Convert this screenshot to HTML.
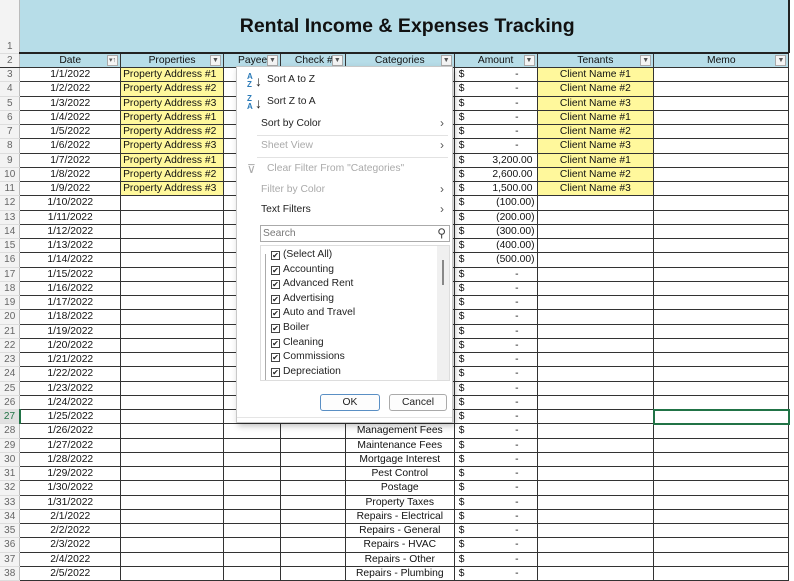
<!DOCTYPE html>
<html><head><meta charset="utf-8"><style>
*{box-sizing:border-box;margin:0;padding:0}
body{width:794px;height:579px;overflow:hidden;background:#fff;font-family:"Liberation Sans",sans-serif;font-size:10.3px;color:#111;position:relative}
table{position:absolute;left:0;top:0;border-collapse:collapse;table-layout:fixed}
td{height:14.26px;padding:0 2px;white-space:nowrap;overflow:hidden;border-bottom:1px solid #333;border-right:1px solid #333;line-height:13px}
td.rh{background:#f3f3f3;color:#666;text-align:center;border-right:1px solid #bbb;border-bottom:1px solid #ddd;font-size:10px;padding:0}
td.c{text-align:center}
td.y{background:#fff89c}
tr.h td{background:#b7dde8;text-align:center;position:relative;border-bottom:1px solid #333}
tr.h td.rh{background:#f3f3f3}
.fb{position:absolute;right:2px;top:1px;width:11px;height:11px;background:#f4f4f4;border:1px solid #aaa;font-size:7px;line-height:9px;color:#555;text-align:center}
.amt{display:flex;justify-content:space-between;padding:0 16px 0 2px}
.menu{position:absolute;left:236px;top:66px;width:217px;height:357px;background:#fff;border:1px solid #c8c8c8;box-shadow:2px 3px 6px rgba(0,0,0,.25);font-size:10.3px;color:#222}
.mi{position:absolute;left:24px}
.g{color:#aaa}
.arr{position:absolute;right:8px;font-size:12px;color:#555}
.sep{position:absolute;left:20px;right:4px;height:1px;background:#e2e2e2}
.ico{position:absolute;left:10px;font-size:8px;line-height:8px;color:#2a7ab8;font-weight:bold}
.list div{height:14.6px;line-height:14.6px;padding-left:22px;position:relative}
.cb{position:absolute;left:10px;top:3px;width:9px;height:9px;border:1px solid #444;font-size:8px;line-height:7px;text-align:center}
.btn{position:absolute;top:327px;height:17px;border:1px solid #aaa;border-radius:3px;text-align:center;line-height:15px;background:#fdfdfd}
</style></head><body>
<table>
<colgroup><col style="width:20px"><col style="width:101px"><col style="width:103px"><col style="width:57px"><col style="width:65px"><col style="width:109px"><col style="width:83px"><col style="width:117px"><col style="width:136px"><col style="width:3px"></colgroup>
<tr style="height:53px"><td class="rh" style="vertical-align:bottom;height:53px">1</td><td colspan="8" style="background:#b7dde8;border-bottom:2px solid #222;border-right:2px solid #222;text-align:center;font-size:19.5px;font-weight:bold;padding-left:8px">Rental Income &amp; Expenses Tracking</td><td style="border:none"></td></tr>
<tr class="h"><td class="rh">2</td><td>Date<span class="fb">▾↑</span></td><td>Properties<span class="fb">▼</span></td><td style="text-align:left;padding-left:14px">Payee<span class="fb">▼</span></td><td style="text-align:left;padding-left:14px">Check #<span class="fb">▼</span></td><td>Categories<span class="fb">▼</span></td><td>Amount<span class="fb">▼</span></td><td>Tenants<span class="fb">▼</span></td><td>Memo<span class="fb">▼</span></td><td style="border:none;background:#fff"></td></tr>
<tr><td class="rh">3</td><td class="c">1/1/2022</td><td class="y">Property Address #1</td><td></td><td></td><td></td><td><div class="amt"><span>$</span><span>-</span></div></td><td class="c y">Client Name #1</td><td></td><td style="border:none"></td></tr>
<tr><td class="rh">4</td><td class="c">1/2/2022</td><td class="y">Property Address #2</td><td></td><td></td><td></td><td><div class="amt"><span>$</span><span>-</span></div></td><td class="c y">Client Name #2</td><td></td><td style="border:none"></td></tr>
<tr><td class="rh">5</td><td class="c">1/3/2022</td><td class="y">Property Address #3</td><td></td><td></td><td></td><td><div class="amt"><span>$</span><span>-</span></div></td><td class="c y">Client Name #3</td><td></td><td style="border:none"></td></tr>
<tr><td class="rh">6</td><td class="c">1/4/2022</td><td class="y">Property Address #1</td><td></td><td></td><td></td><td><div class="amt"><span>$</span><span>-</span></div></td><td class="c y">Client Name #1</td><td></td><td style="border:none"></td></tr>
<tr><td class="rh">7</td><td class="c">1/5/2022</td><td class="y">Property Address #2</td><td></td><td></td><td></td><td><div class="amt"><span>$</span><span>-</span></div></td><td class="c y">Client Name #2</td><td></td><td style="border:none"></td></tr>
<tr><td class="rh">8</td><td class="c">1/6/2022</td><td class="y">Property Address #3</td><td></td><td></td><td></td><td><div class="amt"><span>$</span><span>-</span></div></td><td class="c y">Client Name #3</td><td></td><td style="border:none"></td></tr>
<tr><td class="rh">9</td><td class="c">1/7/2022</td><td class="y">Property Address #1</td><td></td><td></td><td></td><td><div class="amt" style="padding-right:2px"><span>$</span><span>3,200.00</span></div></td><td class="c y">Client Name #1</td><td></td><td style="border:none"></td></tr>
<tr><td class="rh">10</td><td class="c">1/8/2022</td><td class="y">Property Address #2</td><td></td><td></td><td></td><td><div class="amt" style="padding-right:2px"><span>$</span><span>2,600.00</span></div></td><td class="c y">Client Name #2</td><td></td><td style="border:none"></td></tr>
<tr><td class="rh">11</td><td class="c">1/9/2022</td><td class="y">Property Address #3</td><td></td><td></td><td></td><td><div class="amt" style="padding-right:2px"><span>$</span><span>1,500.00</span></div></td><td class="c y">Client Name #3</td><td></td><td style="border:none"></td></tr>
<tr><td class="rh">12</td><td class="c">1/10/2022</td><td></td><td></td><td></td><td></td><td><div class="amt" style="padding-right:0"><span>$</span><span>(100.00)</span></div></td><td></td><td></td><td style="border:none"></td></tr>
<tr><td class="rh">13</td><td class="c">1/11/2022</td><td></td><td></td><td></td><td></td><td><div class="amt" style="padding-right:0"><span>$</span><span>(200.00)</span></div></td><td></td><td></td><td style="border:none"></td></tr>
<tr><td class="rh">14</td><td class="c">1/12/2022</td><td></td><td></td><td></td><td></td><td><div class="amt" style="padding-right:0"><span>$</span><span>(300.00)</span></div></td><td></td><td></td><td style="border:none"></td></tr>
<tr><td class="rh">15</td><td class="c">1/13/2022</td><td></td><td></td><td></td><td></td><td><div class="amt" style="padding-right:0"><span>$</span><span>(400.00)</span></div></td><td></td><td></td><td style="border:none"></td></tr>
<tr><td class="rh">16</td><td class="c">1/14/2022</td><td></td><td></td><td></td><td></td><td><div class="amt" style="padding-right:0"><span>$</span><span>(500.00)</span></div></td><td></td><td></td><td style="border:none"></td></tr>
<tr><td class="rh">17</td><td class="c">1/15/2022</td><td></td><td></td><td></td><td></td><td><div class="amt"><span>$</span><span>-</span></div></td><td></td><td></td><td style="border:none"></td></tr>
<tr><td class="rh">18</td><td class="c">1/16/2022</td><td></td><td></td><td></td><td></td><td><div class="amt"><span>$</span><span>-</span></div></td><td></td><td></td><td style="border:none"></td></tr>
<tr><td class="rh">19</td><td class="c">1/17/2022</td><td></td><td></td><td></td><td></td><td><div class="amt"><span>$</span><span>-</span></div></td><td></td><td></td><td style="border:none"></td></tr>
<tr><td class="rh">20</td><td class="c">1/18/2022</td><td></td><td></td><td></td><td></td><td><div class="amt"><span>$</span><span>-</span></div></td><td></td><td></td><td style="border:none"></td></tr>
<tr><td class="rh">21</td><td class="c">1/19/2022</td><td></td><td></td><td></td><td></td><td><div class="amt"><span>$</span><span>-</span></div></td><td></td><td></td><td style="border:none"></td></tr>
<tr><td class="rh">22</td><td class="c">1/20/2022</td><td></td><td></td><td></td><td></td><td><div class="amt"><span>$</span><span>-</span></div></td><td></td><td></td><td style="border:none"></td></tr>
<tr><td class="rh">23</td><td class="c">1/21/2022</td><td></td><td></td><td></td><td></td><td><div class="amt"><span>$</span><span>-</span></div></td><td></td><td></td><td style="border:none"></td></tr>
<tr><td class="rh">24</td><td class="c">1/22/2022</td><td></td><td></td><td></td><td></td><td><div class="amt"><span>$</span><span>-</span></div></td><td></td><td></td><td style="border:none"></td></tr>
<tr><td class="rh">25</td><td class="c">1/23/2022</td><td></td><td></td><td></td><td></td><td><div class="amt"><span>$</span><span>-</span></div></td><td></td><td></td><td style="border:none"></td></tr>
<tr><td class="rh">26</td><td class="c">1/24/2022</td><td></td><td></td><td></td><td></td><td><div class="amt"><span>$</span><span>-</span></div></td><td></td><td></td><td style="border:none"></td></tr>
<tr><td class="rh" style="color:#217346;background:#e1e1e1;border-right:2px solid #217346">27</td><td class="c">1/25/2022</td><td></td><td></td><td></td><td></td><td><div class="amt"><span>$</span><span>-</span></div></td><td></td><td style="outline:2px solid #217346;outline-offset:-1px"></td><td style="border:none"></td></tr>
<tr><td class="rh">28</td><td class="c">1/26/2022</td><td></td><td></td><td></td><td class="c">Management Fees</td><td><div class="amt"><span>$</span><span>-</span></div></td><td></td><td></td><td style="border:none"></td></tr>
<tr><td class="rh">29</td><td class="c">1/27/2022</td><td></td><td></td><td></td><td class="c">Maintenance Fees</td><td><div class="amt"><span>$</span><span>-</span></div></td><td></td><td></td><td style="border:none"></td></tr>
<tr><td class="rh">30</td><td class="c">1/28/2022</td><td></td><td></td><td></td><td class="c">Mortgage Interest</td><td><div class="amt"><span>$</span><span>-</span></div></td><td></td><td></td><td style="border:none"></td></tr>
<tr><td class="rh">31</td><td class="c">1/29/2022</td><td></td><td></td><td></td><td class="c">Pest Control</td><td><div class="amt"><span>$</span><span>-</span></div></td><td></td><td></td><td style="border:none"></td></tr>
<tr><td class="rh">32</td><td class="c">1/30/2022</td><td></td><td></td><td></td><td class="c">Postage</td><td><div class="amt"><span>$</span><span>-</span></div></td><td></td><td></td><td style="border:none"></td></tr>
<tr><td class="rh">33</td><td class="c">1/31/2022</td><td></td><td></td><td></td><td class="c">Property Taxes</td><td><div class="amt"><span>$</span><span>-</span></div></td><td></td><td></td><td style="border:none"></td></tr>
<tr><td class="rh">34</td><td class="c">2/1/2022</td><td></td><td></td><td></td><td class="c">Repairs - Electrical</td><td><div class="amt"><span>$</span><span>-</span></div></td><td></td><td></td><td style="border:none"></td></tr>
<tr><td class="rh">35</td><td class="c">2/2/2022</td><td></td><td></td><td></td><td class="c">Repairs - General</td><td><div class="amt"><span>$</span><span>-</span></div></td><td></td><td></td><td style="border:none"></td></tr>
<tr><td class="rh">36</td><td class="c">2/3/2022</td><td></td><td></td><td></td><td class="c">Repairs - HVAC</td><td><div class="amt"><span>$</span><span>-</span></div></td><td></td><td></td><td style="border:none"></td></tr>
<tr><td class="rh">37</td><td class="c">2/4/2022</td><td></td><td></td><td></td><td class="c">Repairs - Other</td><td><div class="amt"><span>$</span><span>-</span></div></td><td></td><td></td><td style="border:none"></td></tr>
<tr><td class="rh">38</td><td class="c">2/5/2022</td><td></td><td></td><td></td><td class="c">Repairs - Plumbing</td><td><div class="amt"><span>$</span><span>-</span></div></td><td></td><td></td><td style="border:none"></td></tr>
</table>

<div class="menu">
<div class="ico" style="top:6px">A<br>Z</div><div class="mi" style="left:18px;top:6px;font-size:14px">↓</div><div class="mi" style="left:30px;top:7px">Sort A to Z</div>
<div class="ico" style="top:28px">Z<br>A</div><div class="mi" style="left:18px;top:28px;font-size:14px">↓</div><div class="mi" style="left:30px;top:29px">Sort Z to A</div>
<div class="mi" style="top:51px">Sort by Color</div><div class="arr" style="top:49px">›</div>
<div class="sep" style="top:68px"></div>
<div class="mi g" style="top:73px">Sheet View</div><div class="arr g" style="top:71px">›</div>
<div class="sep" style="top:90px"></div>
<div class="mi g" style="left:10px;top:95px;font-size:12px">⊽</div><div class="mi g" style="left:30px;top:96px">Clear Filter From "Categories"</div>
<div class="mi g" style="top:117px">Filter by Color</div><div class="arr g" style="top:115px">›</div>
<div class="mi" style="top:137px">Text Filters</div><div class="arr" style="top:135px">›</div>
<div style="position:absolute;left:23px;top:158px;width:190px;height:17px;border:1px solid #aaa;color:#777;padding-left:2px;line-height:15px">Search<span style="position:absolute;right:3px;top:0;color:#444;font-size:12px">⚲</span></div>
<div class="list" style="position:absolute;left:23px;top:178px;width:190px;height:136px;border:1px solid #ddd;overflow:hidden;padding-top:2px">
<div><span class="cb">✔</span>(Select All)</div><div><span class="cb">✔</span>Accounting</div><div><span class="cb">✔</span>Advanced Rent</div><div><span class="cb">✔</span>Advertising</div><div><span class="cb">✔</span>Auto and Travel</div><div><span class="cb">✔</span>Boiler</div><div><span class="cb">✔</span>Cleaning</div><div><span class="cb">✔</span>Commissions</div><div><span class="cb">✔</span>Depreciation</div>
<span style="position:absolute;left:4px;top:8px;width:1px;height:128px;background:#aaa"></span>
<span style="position:absolute;right:0;top:0;width:12px;height:136px;background:#f0f0f0"></span>
<span style="position:absolute;right:5px;top:14px;width:2px;height:25px;background:#888"></span>
</div>
<div class="btn" style="left:83px;width:60px;border-color:#5a8fc4">OK</div>
<div class="btn" style="left:152px;width:58px">Cancel</div>
<div style="position:absolute;left:0;right:0;top:350px;height:1px;background:#e5e5e5"></div>
</div>
</body></html>
